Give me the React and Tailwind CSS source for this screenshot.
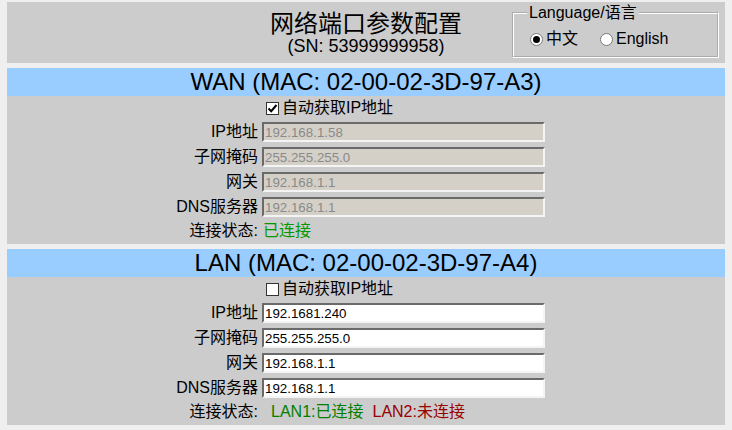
import React from "react";

function Checkbox({ checked }) {
  return (
    <span className="inline-flex items-center justify-center w-[13px] h-[13px] border border-[#333333] bg-white shrink-0">
      {checked && (
        <svg width="11" height="11" viewBox="0 0 11 11">
          <path d="M1.5 5.5 L4.2 8.2 L9.5 2" fill="none" stroke="#000" strokeWidth="2" />
        </svg>
      )}
    </span>
  );
}

function Radio({ checked }) {
  return (
    <span className="inline-flex items-center justify-center w-[13px] h-[13px] rounded-full border border-[#7a7a7a] bg-white shrink-0">
      {checked && <span className="w-[7px] h-[7px] rounded-full bg-black" />}
    </span>
  );
}

function Field({ label, value, disabled }) {
  return (
    <div className="flex items-center h-[20px]">
      <div className="w-[251px] text-right text-[16px] leading-[20px] text-black whitespace-nowrap">{label}</div>
      <input
        readOnly
        value={value}
        className={
          "ml-[4px] w-[283px] h-[20px] border-2 border-t-[#6a6a6a] border-l-[#6a6a6a] border-b-[#f4f4f4] border-r-[#f4f4f4] px-[1px] text-[13.333px] leading-[16px] outline-none " +
          (disabled ? "bg-[#d4d0c8] text-[#8a8a8a]" : "bg-white text-black")
        }
      />
    </div>
  );
}

function Section({ title, auto, fields, status }) {
  return (
    <div className="mx-[7px] mt-[5px]">
      <div className="h-[28px] bg-[#99ccff] text-center text-[24px] leading-[28px] text-black">{title}</div>
      <div className="bg-[#cccccc] pt-[2px] pb-[3px] flex flex-col">
        <div className="flex items-center h-[20px] pl-[259px]">
          <Checkbox checked={auto} />
          <span className="ml-[3px] text-[16px] leading-[20px]">自动获取IP地址</span>
        </div>
        <div className="mt-[4px] flex flex-col gap-[5px]">
          {fields.map((f) => (
            <Field key={f[0]} label={f[0]} value={f[1]} disabled={auto} />
          ))}
        </div>
        <div className="mt-[4px] flex items-center h-[20px] text-[16px] leading-[20px]">
          <div className="w-[251px] text-right">连接状态:</div>
          {status}
        </div>
      </div>
    </div>
  );
}

export default function App() {
  return (
    <div className="min-h-screen bg-[#efefef] pt-[2px] font-['Liberation_Sans','Noto_Sans_CJK_SC',sans-serif] text-black">
      <div className="mx-[7px] h-[61px] bg-[#cccccc] grid grid-cols-[1fr_auto_1fr]">
        <div />
        <div className="flex flex-col items-center pt-[9px]">
          <div className="text-[24px] leading-[26px]">网络端口参数配置</div>
          <div className="text-[18px] leading-[18px]">(SN: 53999999958)</div>
        </div>
        <div className="justify-self-end self-start mr-[6px] mt-[2px]">
          <fieldset className="w-[207px] border-2 [border-style:groove] border-white pl-[13px] pb-[8px]">
            <legend className="px-[2px] text-[16px] leading-[18px]">Language/语言</legend>
            <div className="flex items-center h-[18px] mt-[8px] text-[16px] leading-[18px]">
              <span className="ml-[3px] flex"><Radio checked /></span>
              <span className="ml-[3px]">中文</span>
              <span className="ml-[22px] flex"><Radio /></span>
              <span className="ml-[3px]">English</span>
            </div>
          </fieldset>
        </div>
      </div>

      <Section
        title="WAN (MAC: 02-00-02-3D-97-A3)"
        auto
        fields={[
          ["IP地址", "192.168.1.58"],
          ["子网掩码", "255.255.255.0"],
          ["网关", "192.168.1.1"],
          ["DNS服务器", "192.168.1.1"],
        ]}
        status={<span className="ml-[5px] text-[#009900]">已连接</span>}
      />

      <Section
        title="LAN (MAC: 02-00-02-3D-97-A4)"
        auto={false}
        fields={[
          ["IP地址", "192.1681.240"],
          ["子网掩码", "255.255.255.0"],
          ["网关", "192.168.1.1"],
          ["DNS服务器", "192.168.1.1"],
        ]}
        status={
          <>
            <span className="ml-[13px] text-[#008000]">LAN1:已连接</span>
            <span className="ml-[9px] text-[#990000]">LAN2:未连接</span>
          </>
        }
      />
    </div>
  );
}
